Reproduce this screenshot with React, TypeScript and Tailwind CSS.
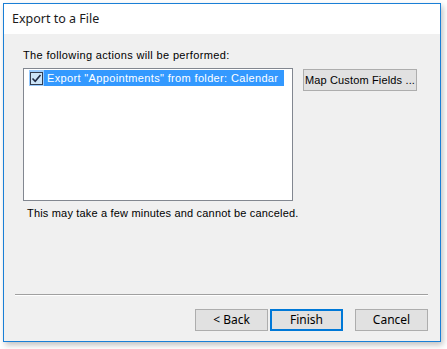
export default function App() {
  return (
    <div className="w-[447px] h-[349px] bg-white pt-[3px] pl-[3px] font-['Liberation_Sans',Arial,sans-serif] text-black">
      <div className="w-[438px] h-[339px] border border-[#1a7fd6] flex flex-col shadow-[2px_3px_6px_rgba(0,0,0,0.25)]">
        {/* title bar */}
        <div className="h-[30px] bg-white flex items-center pl-[8px] text-[12.5px] text-[#1b1b1b] font-['Noto_Sans',sans-serif]">
          Export to a File
        </div>

        <div className="flex-1 bg-[#f0f0f0] px-[11px] pt-[15px] text-[11px] tracking-[0.35px]">
          <div className="pl-[8px]">
            <div className="leading-[13px] h-[13px]">The following actions will be performed:</div>

            <div className="flex items-start gap-[10px] mt-[6px]">
              <div className="w-[270px] h-[133px] bg-white border border-[#828790] pt-[1px] pl-[5px]">
                <div className="inline-flex items-center h-[16px] bg-[#3399ff] pr-[6px]">
                  <span className="w-[15px] h-[16px] bg-[#99ccff] flex items-center justify-center">
                    <span className="w-[13px] h-[13px] border border-[#333c4e] bg-[#cce4f7] flex items-center justify-center">
                      <svg width="11" height="11" viewBox="0 0 11 11">
                        <path d="M1.5 5.5 L4.2 8.2 L9.5 2" fill="none" stroke="#1f2a44" strokeWidth="1.6" />
                      </svg>
                    </span>
                  </span>
                  <span className="ml-[3px] text-white leading-[16px]">
                    Export "Appointments" from folder: Calendar
                  </span>
                </div>
              </div>

              <button className="mt-[1px] w-[114px] h-[22px] bg-[#e1e1e1] border border-[#adadad] text-[11px] tracking-[0.15px] leading-[20px] text-center">
                Map Custom Fields ...
              </button>
            </div>

            <div className="pl-[4px] mt-[6px] leading-[13px] h-[13px] tracking-[0.18px]">
              This may take a few minutes and cannot be canceled.
            </div>
          </div>

          <div className="mt-[74px] h-[2px] border-t border-[#a0a0a0] border-b border-b-white w-[413px]" />

          <div className="flex justify-end mt-[13px] w-[413px] text-[12px] tracking-normal font-['Noto_Sans',sans-serif]">
            <button className="w-[73px] h-[22px] bg-[#e1e1e1] border border-[#adadad] leading-[20px]">
              &lt; Back
            </button>
            <button className="ml-[2px] w-[73px] h-[22px] bg-[#e1e1e1] border-2 border-[#0078d7] leading-[18px]">
              Finish
            </button>
            <button className="ml-[12px] w-[73px] h-[22px] bg-[#e1e1e1] border border-[#adadad] leading-[20px]">
              Cancel
            </button>
          </div>
        </div>
      </div>
    </div>
  );
}
